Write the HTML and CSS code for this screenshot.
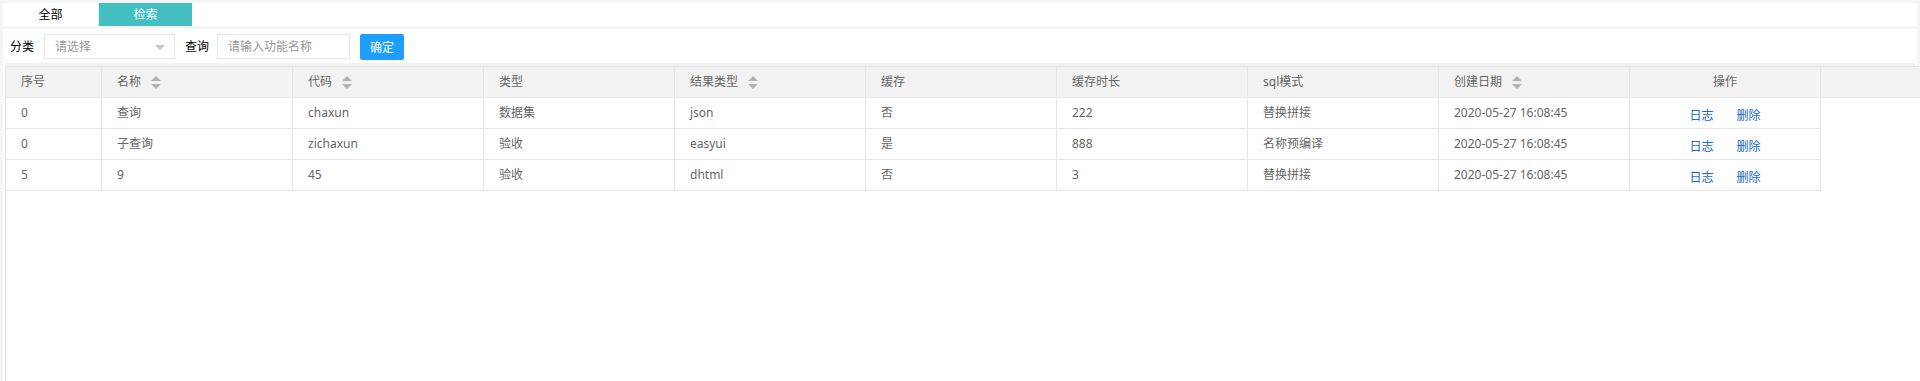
FILE: index.html
```html
<!DOCTYPE html>
<html lang="zh-CN">
<head>
<meta charset="utf-8">
<title>检索</title>
<link rel="stylesheet" href="styles.css">
</head>
<body>
<div class="tabs">
  <div class="tab">全部</div>
  <div class="tab active">检索</div>
</div>
<div class="panel">
  <div class="toolbar">
    <span class="label">分类</span>
    <div class="select"><span class="ph">请选择</span><span class="caret"></span></div>
    <span class="label">查询</span>
    <div class="input"><span class="ph">请输入功能名称</span></div>
    <button class="btn">确定</button>
  </div>
  <div class="strip"></div>
  <div class="view">
    <div class="row head">
      <div class="cell">序号</div>
      <div class="cell">名称<svg class="sort" width="10" height="13" viewBox="0 0 10 13"><path d="M0 5 L5 0 L10 5Z M0 8 L10 8 L5 13Z"/></svg></div>
      <div class="cell">代码<svg class="sort" width="10" height="13" viewBox="0 0 10 13"><path d="M0 5 L5 0 L10 5Z M0 8 L10 8 L5 13Z"/></svg></div>
      <div class="cell">类型</div>
      <div class="cell">结果类型<svg class="sort" width="10" height="13" viewBox="0 0 10 13"><path d="M0 5 L5 0 L10 5Z M0 8 L10 8 L5 13Z"/></svg></div>
      <div class="cell">缓存</div>
      <div class="cell">缓存时长</div>
      <div class="cell">sql模式</div>
      <div class="cell">创建日期<svg class="sort" width="10" height="13" viewBox="0 0 10 13"><path d="M0 5 L5 0 L10 5Z M0 8 L10 8 L5 13Z"/></svg></div>
      <div class="cell center">操作</div>
      <div class="filler"></div>
    </div>
    <div class="row">
      <div class="cell">0</div>
      <div class="cell">查询</div>
      <div class="cell">chaxun</div>
      <div class="cell">数据集</div>
      <div class="cell">json</div>
      <div class="cell">否</div>
      <div class="cell">222</div>
      <div class="cell">替换拼接</div>
      <div class="cell">2020-05-27 16:08:45</div>
      <div class="cell ops"><a>日志</a><a>删除</a></div>
    </div>
    <div class="row">
      <div class="cell">0</div>
      <div class="cell">子查询</div>
      <div class="cell">zichaxun</div>
      <div class="cell">验收</div>
      <div class="cell">easyui</div>
      <div class="cell">是</div>
      <div class="cell">888</div>
      <div class="cell">名称预编译</div>
      <div class="cell">2020-05-27 16:08:45</div>
      <div class="cell ops"><a>日志</a><a>删除</a></div>
    </div>
    <div class="row">
      <div class="cell">5</div>
      <div class="cell">9</div>
      <div class="cell">45</div>
      <div class="cell">验收</div>
      <div class="cell">dhtml</div>
      <div class="cell">否</div>
      <div class="cell">3</div>
      <div class="cell">替换拼接</div>
      <div class="cell">2020-05-27 16:08:45</div>
      <div class="cell ops"><a>日志</a><a>删除</a></div>
    </div>
  </div>
</div>
</body>
</html>
```
FILE: styles.css
```css
* { box-sizing: border-box; }
html, body { margin: 0; height: 100%; overflow: hidden; }
body {
  background: #f5f5f5;
  font-family: "Noto Sans", "Noto Sans CJK SC", sans-serif;
  font-size: 12px;
  color: #333;
  padding-top: 3px;
}
.tabs {
  display: flex;
  height: 23px;
  margin: 0 3px;
  background: #fff;
}
.tab {
  width: 95px;
  line-height: 23px;
  text-align: center;
  color: #000;
}
.tab.active {
  width: 94px;
  background: #43bfc0;
  color: #fff;
  border-left: 1px solid #d8eeee;
}
.panel {
  margin: 3px 3px 0;
  background: #fff;
  height: calc(100% - 26px);
  display: flex;
  flex-direction: column;
}
.toolbar {
  height: 34px;
  display: flex;
  align-items: center;
  padding-left: 7px;
}
.label { color: #000; margin-right: 10px; }
.select, .input {
  position: relative;
  height: 25px;
  border: 1px solid #e6e6e6;
  display: flex;
  align-items: center;
  padding-left: 10px;
  margin-right: 10px;
}
.select { width: 131px; }
.input { width: 133px; margin-left: -2px; }
.ph { color: #999; }
.caret {
  position: absolute;
  right: 9px;
  top: 10px;
  border-style: solid;
  border-width: 5px 5px 0;
  border-color: #c2c2c2 transparent transparent;
}
.btn {
  height: 26px;
  width: 44px;
  padding: 0;
  border: 0;
  border-radius: 2px;
  background: #1e9fff;
  color: #fff;
  font: inherit;
  margin-top: 1px;
}
.strip {
  height: 3px;
  margin: 0 2px;
  background: #f2f2f2;
}
.view {
  flex: 1;
  margin: 0 -3px 0 2px;
  border-top: 1px solid #e6e6e6;
  border-left: 1px solid #e6e6e6;
  background: #fff;
}
.row {
  display: grid;
  grid-template-columns: 96px repeat(9, 191px);
  height: 31px;
  color: #666;
}
.row.head {
  grid-template-columns: 96px repeat(9, 191px) 1fr;
  background: #f2f2f2;
  border-bottom: 1px solid #e6e6e6;
  height: 31px;
}
.row:not(.head) { width: 1815px; }
.cell {
  border-right: 1px solid #e6e6e6;
  border-bottom: 1px solid #e6e6e6;
  padding: 0 15px;
  line-height: 30px;
  white-space: nowrap;
  display: flex;
  align-items: center;
}
.head .cell { border-bottom: 0; }
.cell.center { justify-content: center; }
.sort { fill: #b2b2b2; margin-left: 10px; }
.ops {
  justify-content: center;
  align-items: flex-start;
  padding-top: 6px;
  line-height: 24px;
  gap: 23px;
}
.ops a { color: #1a66cc; cursor: pointer; }
```
